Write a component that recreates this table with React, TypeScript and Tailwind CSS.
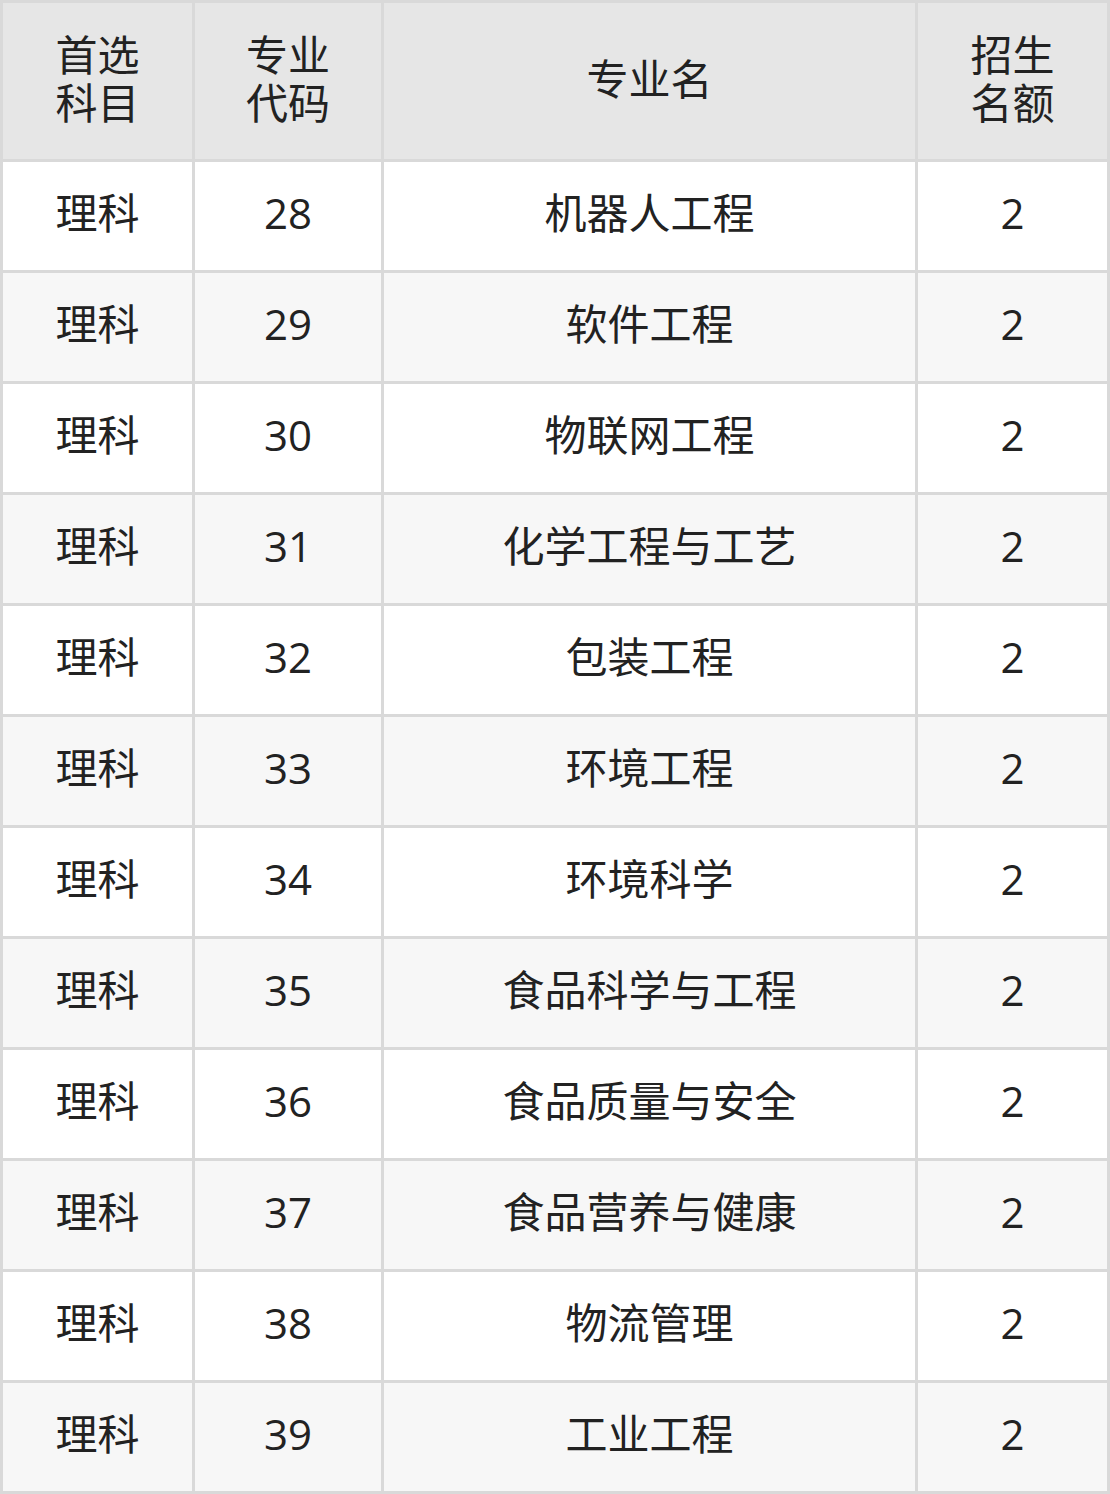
const rows: [string, string, string, string][] = [
  ["理科", "28", "机器人工程", "2"],
  ["理科", "29", "软件工程", "2"],
  ["理科", "30", "物联网工程", "2"],
  ["理科", "31", "化学工程与工艺", "2"],
  ["理科", "32", "包装工程", "2"],
  ["理科", "33", "环境工程", "2"],
  ["理科", "34", "环境科学", "2"],
  ["理科", "35", "食品科学与工程", "2"],
  ["理科", "36", "食品质量与安全", "2"],
  ["理科", "37", "食品营养与健康", "2"],
  ["理科", "38", "物流管理", "2"],
  ["理科", "39", "工业工程", "2"],
];

const headers = ["首选\n科目", "专业\n代码", "专业名", "招生\n名额"];

export default function App() {
  return (
    <div
      className="w-[1110px] h-[1494px] bg-[#d9d9d9] p-[3px] grid gap-[3px] grid-cols-[189px_186px_531px_189px] grid-rows-[156px_repeat(12,108px)] text-[#222222] text-[42px]"
      style={{ fontFamily: '"Open Sans", "Noto Sans CJK SC", sans-serif' }}
    >
      {headers.map((h) => (
        <div
          key={h}
          className="bg-[#e6e6e6] flex items-center justify-center text-center whitespace-pre-line leading-[48px] pb-[5px]"
        >
          {h}
        </div>
      ))}
      {rows.map((r, i) =>
        r.map((c, j) => (
          <div
            key={`${i}-${j}`}
            className={`${i % 2 === 0 ? "bg-white" : "bg-[#f7f7f7]"} flex items-center justify-center leading-none pb-[6px]`}
          >
            {c}
          </div>
        ))
      )}
    </div>
  );
}
